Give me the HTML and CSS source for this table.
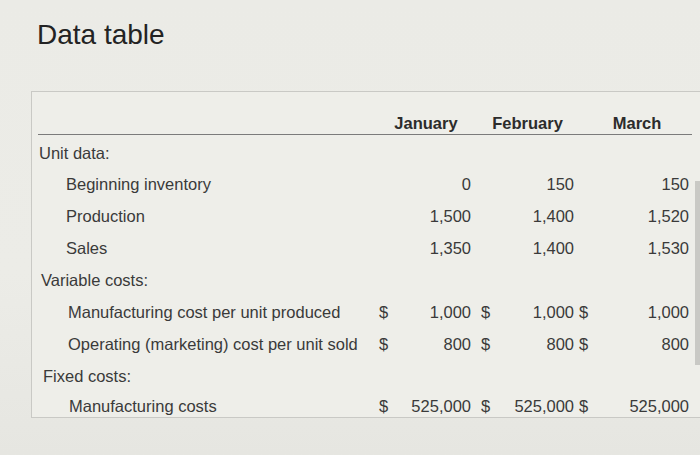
FILE: index.html
```html
<!DOCTYPE html>
<html>
<head>
<meta charset="utf-8">
<link rel="stylesheet" href="styles.css">
</head>
<body>
<h1 class="title">Data table</h1>
<div class="box">
  <table class="data">
    <colgroup>
      <col class="c-label"><col class="c-sym1"><col class="c-val1"><col class="c-sym2"><col class="c-val2"><col class="c-sym3"><col class="c-val3">
    </colgroup>
    <thead>
      <tr>
        <th></th>
        <th colspan="2">January</th>
        <th colspan="2">February</th>
        <th colspan="2">March</th>
      </tr>
    </thead>
    <tbody>
      <tr class="first"><td class="head">Unit data:</td><td></td><td></td><td></td><td></td><td></td><td></td></tr>
      <tr><td class="sub">Beginning inventory</td><td></td><td class="num">0</td><td></td><td class="num">150</td><td></td><td class="num n3">150</td></tr>
      <tr><td class="sub">Production</td><td></td><td class="num">1,500</td><td></td><td class="num">1,400</td><td></td><td class="num n3">1,520</td></tr>
      <tr><td class="sub">Sales</td><td></td><td class="num">1,350</td><td></td><td class="num">1,400</td><td></td><td class="num n3">1,530</td></tr>
      <tr><td class="head h2">Variable costs:</td><td></td><td></td><td></td><td></td><td></td><td></td></tr>
      <tr><td class="sub s2">Manufacturing cost per unit produced</td><td class="sym s1">$</td><td class="num">1,000</td><td class="sym s2c">$</td><td class="num">1,000</td><td class="sym s3c">$</td><td class="num n3">1,000</td></tr>
      <tr><td class="sub s2">Operating (marketing) cost per unit sold</td><td class="sym s1">$</td><td class="num">800</td><td class="sym s2c">$</td><td class="num">800</td><td class="sym s3c">$</td><td class="num n3">800</td></tr>
      <tr><td class="head h3">Fixed costs:</td><td></td><td></td><td></td><td></td><td></td><td></td></tr>
      <tr class="last"><td class="sub s3">Manufacturing costs</td><td class="sym s1">$</td><td class="num">525,000</td><td class="sym s2c">$</td><td class="num">525,000</td><td class="sym s3c">$</td><td class="num n3">525,000</td></tr>
    </tbody>
  </table>
  <div class="thumb"></div>
</div>
</body>
</html>
```
FILE: styles.css
```css
html, body {
  margin: 0;
  padding: 0;
  overflow: hidden;
}
body {
  width: 700px;
  height: 455px;
  background: linear-gradient(180deg, #ebebe6 0%, #ececE7 60%, #e6e6e1 100%);
  font-family: "Liberation Sans", Arial, sans-serif;
  color: #3a3a3a;
}
.title {
  margin: 0;
  padding: 18px 0 0 37px;
  height: 34px;
  line-height: 34px;
  font-size: 28px;
  font-weight: normal;
  color: #232323;
}
.box {
  position: relative;
  margin: 39px 0 0 31px;
  width: 690px;
  height: 327px;
  overflow: hidden;
  border: 1px solid #c9c9c5;
  border-right: none;
  background: #eeeee9;
  box-sizing: border-box;
  padding-left: 6px;
}
.data {
  width: 654px;
  border-collapse: collapse;
  table-layout: fixed;
  font-size: 16.5px;
}
.c-label { width: 335px; }
.c-sym1 { width: 23px; }
.c-val1 { width: 77px; }
.c-sym2 { width: 27px; }
.c-val2 { width: 76px; }
.c-sym3 { width: 25px; }
.c-val3 { width: 91px; }
.data th {
  height: 42px;
  padding: 20px 0 0 6px;
  box-sizing: border-box;
  vertical-align: top;
  line-height: 22px;
  font-weight: bold;
  color: #2c2c2c;
  text-align: center;
  border-bottom: 1px solid #7b7b7b;
}
.data td {
  height: 32px;
  padding: 0;
  line-height: 32px;
  white-space: nowrap;
}
.data tr.first td {
  height: 33px;
  line-height: 30px;
  vertical-align: bottom;
}
.data tr.last td {
  line-height: 28px;
  vertical-align: top;
}
.head { padding-left: 1px !important; }
.head.h2 { padding-left: 3px !important; }
.head.h3 { padding-left: 5px !important; }
.sub { padding-left: 28px !important; }
.sub.s2 { padding-left: 30px !important; }
.sub.s3 { padding-left: 31px !important; }
.num {
  text-align: right;
  padding-right: 2px !important;
}
.num.n3 { padding-right: 3px !important; }
.sym.s1 { padding-left: 6px !important; }
.sym.s2c { padding-left: 8px !important; }
.sym.s3c { padding-left: 3px !important; }
.thumb {
  position: absolute;
  top: 89px;
  left: 663px;
  width: 12px;
  height: 184px;
  background: #c9c9c5;
}
```
